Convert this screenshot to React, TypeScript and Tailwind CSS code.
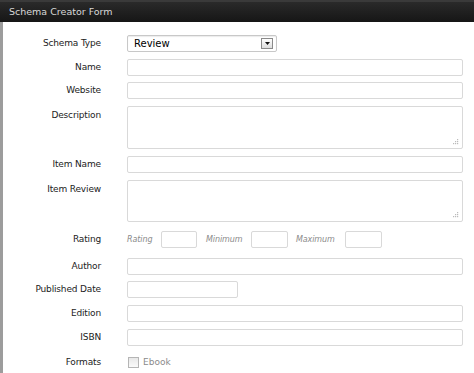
import { ReactNode } from 'react';

const font = { fontFamily: '"DejaVu Sans", Verdana, sans-serif' };

function Row({ label, top, children, align = 'center' }: { label: string; top: string; children: ReactNode; align?: 'center' | 'start' }) {
  return (
    <div className={`flex ${align === 'center' ? 'items-center' : 'items-start'} ${top}`}>
      <div className={`w-[101px] shrink-0 text-right text-[9px] tracking-[-0.15px] text-[#222] ${align === 'start' ? 'pt-[3px]' : ''}`}>{label}</div>
      <div className="ml-[26px] flex-1 mr-[11px]">{children}</div>
    </div>
  );
}

const input = 'block h-[17px] w-full rounded-[2px] border border-[#d9d9d9] bg-white';
const area = 'relative block w-full rounded-[2px] border border-[#d9d9d9] bg-white';

function Grip() {
  return (
    <svg className="absolute bottom-[3px] right-[3px]" width="7" height="7" viewBox="0 0 7 7">
      <rect x="5" y="1" width="1.2" height="1.2" fill="#bbb" />
      <rect x="3" y="3" width="1.2" height="1.2" fill="#bbb" />
      <rect x="5" y="3" width="1.2" height="1.2" fill="#bbb" />
      <rect x="1" y="5" width="1.2" height="1.2" fill="#bbb" />
      <rect x="3" y="5" width="1.2" height="1.2" fill="#bbb" />
      <rect x="5" y="5" width="1.2" height="1.2" fill="#bbb" />
    </svg>
  );
}

export default function App() {
  return (
    <div className="h-[373px] w-[474px] overflow-hidden bg-white" style={font}>
      <div className="h-[2px] bg-[#3a3a3a]" />
      <div className="flex h-[20px] items-center bg-gradient-to-b from-[#2a2a2a] to-[#161616] pl-[9px] text-[9.5px] text-[#d8d8d8]">
        Schema Creator Form
      </div>
      <div className="flex h-[351px]">
        <div className="w-[3px] bg-[#9c9c9c]" />
        <div className="flex-1 -ml-[3px]">
          <Row label="Schema Type" top="mt-[13px]">
            <div className="flex h-[17px] w-[150px] items-center justify-between rounded-[2px] border border-[#c8c8c8] bg-white pl-[6px] pr-[3px] text-[10px] text-black shadow-[inset_0_1px_1px_rgba(0,0,0,0.08)]">
              <span>Review</span>
              <span className="flex h-[11px] w-[12px] items-center justify-center border border-[#8a8a8a] bg-gradient-to-b from-white to-[#ddd]">
                <svg width="5" height="3" viewBox="0 0 5 3"><path d="M0 0h5L2.5 3z" fill="#111" /></svg>
              </span>
            </div>
          </Row>
          <Row label="Name" top="mt-[7px]"><div className={input} /></Row>
          <Row label="Website" top="mt-[6px]"><div className={input} /></Row>
          <Row label="Description" top="mt-[7px]" align="start"><div className={`${area} h-[43px]`}><Grip /></div></Row>
          <Row label="Item Name" top="mt-[7px]"><div className={input} /></Row>
          <Row label="Item Review" top="mt-[7px]" align="start"><div className={`${area} h-[42px]`}><Grip /></div></Row>
          <Row label="Rating" top="mt-[9px]">
            <div className="flex items-center text-[8px] tracking-[-0.1px] italic text-[#8a8a8a]">
              <span className="w-[25px]">Rating</span>
              <div className="ml-[9px] h-[17px] w-[36px] rounded-[2px] border border-[#d9d9d9]" />
              <span className="ml-[9px] w-[36px]">Minimum</span>
              <div className="ml-[9px] h-[17px] w-[37px] rounded-[2px] border border-[#d9d9d9]" />
              <span className="ml-[8px] w-[40px]">Maximum</span>
              <div className="ml-[9px] h-[17px] w-[37px] rounded-[2px] border border-[#d9d9d9]" />
            </div>
          </Row>
          <Row label="Author" top="mt-[10px]"><div className={input} /></Row>
          <Row label="Published Date" top="mt-[6px]"><div className={`${input} !w-[111px]`} /></Row>
          <Row label="Edition" top="mt-[7px]"><div className={input} /></Row>
          <Row label="ISBN" top="mt-[7px]"><div className={input} /></Row>
          <Row label="Formats" top="mt-[10px]">
            <div className="flex items-center text-[9px] text-[#8a8a8a]">
              <span className="ml-[1px] h-[11px] w-[11px] border border-[#b5b5b5] bg-gradient-to-b from-[#e8e8e8] to-[#fafafa]" />
              <span className="ml-[4px]">Ebook</span>
            </div>
          </Row>
        </div>
      </div>
    </div>
  );
}
